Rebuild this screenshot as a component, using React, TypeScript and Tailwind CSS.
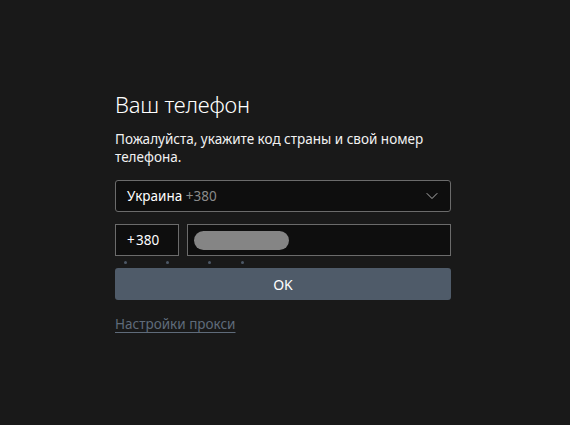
import { ChevronDown } from 'lucide-react';

const font = { fontFamily: '"Noto Sans", "Open Sans", sans-serif' };

export default function App() {
  return (
    <div className="w-[570px] h-[425px] bg-[#191919] text-white overflow-hidden" style={font}>
      <div className="w-[336px] ml-[115px] pt-[89px] flex flex-col">
        <h1 className="text-[22px] font-light leading-[30px] tracking-[-0.2px]">Ваш телефон</h1>
        <p className="mt-[11px] text-[13.5px] leading-[18px] text-[#f2f2f2]">
          Пожалуйста, укажите код страны и свой номер телефона.
        </p>

        <button
          type="button"
          className="mt-[14px] h-[32px] flex items-center justify-between pl-[11px] pr-[8px] rounded-[3px] border border-[#6b6b6b] bg-[#0e0e0e] text-[13.5px]"
        >
          <span>
            Украина <span className="text-[#8a8a8a]">+380</span>
          </span>
          <ChevronDown className="w-[20px] h-[20px] text-[#bdbdbd]" strokeWidth={1.1} />
        </button>

        <div className="mt-[12px] flex gap-[8px]">
          <div className="w-[64px] h-[32px] flex items-center pl-[11px] border border-[#6b6b6b] bg-[#0e0e0e] text-[13.5px]">
            +&#8202;380
          </div>
          <div className="flex-1 h-[32px] flex items-center pl-[6px] border border-[#6b6b6b] bg-[#0e0e0e]">
            <div className="w-[95px] h-[19px] rounded-full bg-[#858585]" />
          </div>
        </div>

        <div className="relative h-[12px]">
          <span className="absolute left-[9px] top-[5px] w-[3px] h-[3px] rounded-full bg-[#4d5866]" />
          <span className="absolute left-[51px] top-[5px] w-[3px] h-[3px] rounded-full bg-[#4d5866]" />
          <span className="absolute left-[93px] top-[5px] w-[3px] h-[3px] rounded-full bg-[#4d5866]" />
          <span className="absolute left-[126px] top-[5px] w-[3px] h-[3px] rounded-full bg-[#4d5866]" />
        </div>

        <button
          type="button"
          className="h-[32px] rounded-[3px] bg-[#4f5b69] text-[14px] text-white"
        >
          OK
        </button>

        <a href="#" className="mt-[15px] self-start text-[13.5px] leading-[18px] text-[#5f6b7a] underline underline-offset-[3px]">
          Настройки прокси
        </a>
      </div>
    </div>
  );
}
